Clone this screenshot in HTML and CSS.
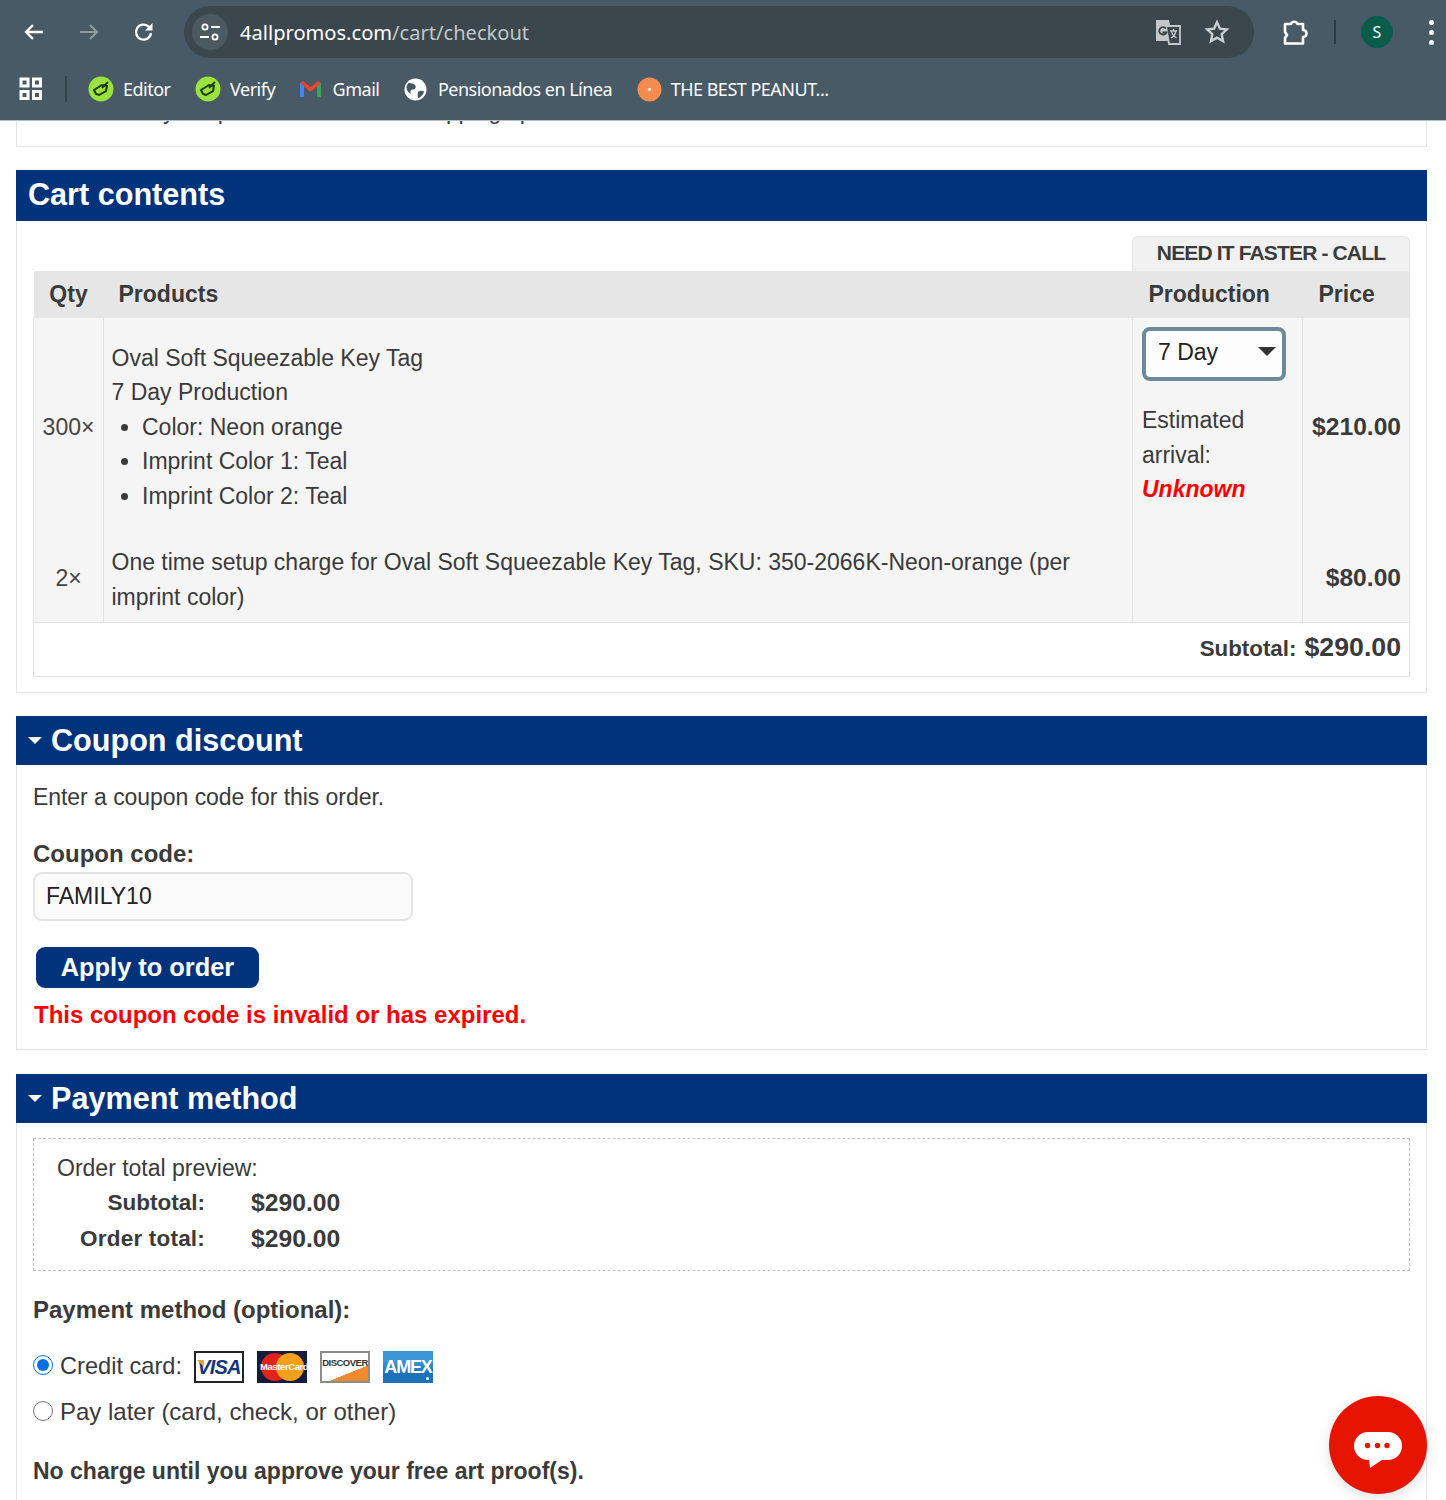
FILE: index.html
```html
<!DOCTYPE html>
<html>
<head>
	<meta charset="utf-8">
	<title>Checkout</title>
	<link rel="stylesheet" href="styles.css">
</head>
<body>
	<div class="browser">
		<div class="toolbar">
			<svg class="nav nav-back" width="24" height="24" viewBox="0 0 24 24"><path d="M21 12H4M11 5l-7 7 7 7" fill="none" stroke="#fff" stroke-width="2.4"/></svg>
			<svg class="nav nav-fwd" width="24" height="24" viewBox="0 0 24 24"><path d="M3 12h17M13 5l7 7-7 7" fill="none" stroke="#8d9aa1" stroke-width="2.2"/></svg>
			<svg class="nav nav-reload" width="24" height="24" viewBox="0 0 24 24"><path d="M19 13a7.5 7.5 0 1 1-2.4-6.4L19 9" fill="none" stroke="#fff" stroke-width="2.3"/><path d="M20.5 3v7.5H13z" fill="#fff"/></svg>
			<div class="omnibox">
				<span class="site-icon">
					<svg width="24" height="24" viewBox="0 0 24 24" fill="none" stroke="#fff" stroke-width="1.8"><circle cx="7" cy="7" r="2.6"/><path d="M13 7h9M2 17h9"/><circle cx="17" cy="17" r="2.6"/></svg>
				</span>
				<span class="url">4allpromos.com<span class="url-path">/cart/checkout</span></span>
				<svg class="translate" width="28" height="28" viewBox="0 0 28 28"><path d="M2 2h13l4 21H2z" fill="#c4c8ca"/><path d="M12 8h14v18H15z" fill="#3c474d" stroke="#c4c8ca" stroke-width="1.8"/><path d="M12 10.500a3.800 3.800 0 1 0 .5 4H8.500" fill="none" stroke="#3c474d" stroke-width="1.800"/><path d="M16 13h7M19.500 11v2M22 13c-1 4-3 6-5 7M17.500 14c1 3 3 5 5 6" fill="none" stroke="#c4c8ca" stroke-width="1.3"/></svg>
				<svg class="star" width="26" height="26" viewBox="0 0 24 24"><path d="M12 3l2.700 6 6.300.7-4.700 4.300 1.300 6.400L12 17.200 6.400 20.400l1.300-6.400L3 9.700 9.300 9z" fill="none" stroke="#c9ced1" stroke-width="2.200"/></svg>
			</div>
			<svg class="puzzle" width="28" height="30" viewBox="0 0 28 30"><path d="M4 7h6a3.500 3.500 0 0 1 6.500 0H22v6a3.500 3.500 0 0 1 0 7v6.500H4V21l2-3-2-3z" fill="none" stroke="#fff" stroke-width="2.6" stroke-linejoin="round"/></svg>
			<span class="bar-sep"></span>
			<span class="avatar">S</span>
			<span class="menu-dots"><i></i><i></i><i></i></span>
		</div>
		<div class="bookmarks">
			<svg class="apps" width="24" height="24" viewBox="0 0 24 24" fill="none" stroke="#fff" stroke-width="3"><rect x="2" y="2" width="7" height="7"/><rect x="14.500" y="2" width="7" height="7"/><rect x="2" y="14.500" width="7" height="7"/><rect x="14.500" y="14.500" width="7" height="7"/></svg>
			<span class="bm-sep"></span>
			<span class="bm">
				<svg width="26" height="26" viewBox="0 0 26 26"><circle cx="13" cy="13" r="12.500" fill="#9be23e"/><path d="M6 14l8-5 5 1-1 5-7 4-3-1z" fill="none" stroke="#1c3a10" stroke-width="2"/><path d="M14 12l6-6" stroke="#1c3a10" stroke-width="1.800"/></svg>
				Editor
			</span>
			<span class="bm">
				<svg width="26" height="26" viewBox="0 0 26 26"><circle cx="13" cy="13" r="12.500" fill="#9be23e"/><path d="M6 14l8-5 5 1-1 5-7 4-3-1z" fill="none" stroke="#1c3a10" stroke-width="2"/><path d="M14 12l6-6" stroke="#1c3a10" stroke-width="1.800"/></svg>
				Verify
			</span>
			<span class="bm bm-gmail">
				<svg width="21" height="18" viewBox="0 0 21 18"><path d="M0 17V3h4v14z" fill="#4285f4"/><path d="M17 17V3h4v14z" fill="#34a853"/><path d="M0 3l3-2 7.500 6L18 1l3 2-10.500 9z" fill="#ea4335"/></svg>
				Gmail
			</span>
			<span class="bm bm-globe">
				<svg width="23" height="23" viewBox="0 0 24 24"><circle cx="12" cy="12" r="11.500" fill="#fff"/><path d="M5 5c3 1 6 1 7 3s-1 4-3 4-3 2-2 4-3-1-4-4 0-5 2-7zM15 14c2-1 4-1 6 0-1 3-3 6-6 7-1-2-1-5 0-7z" fill="#46565f"/></svg>
				Pensionados en Línea
			</span>
			<span class="bm bm-peanut">
				<svg width="25" height="25" viewBox="0 0 26 26"><circle cx="13" cy="13" r="12.500" fill="#f58b4c"/><circle cx="13" cy="13" r="1.800" fill="#fde3d2"/></svg>
				THE BEST PEANUT...
			</span>
		</div>
	</div>

	<div class="page">
		<div class="panel panel-top">
			<p class="cut-line">Please modify the products before the shipping options</p>
		</div>

		<div class="section-head">Cart contents</div>
		<div class="panel panel-cart">
			<div class="tab-row"><span class="faster-tab">NEED IT FASTER - CALL</span></div>
			<table class="cart">
				<colgroup>
					<col class="col-qty"><col class="col-prod"><col class="col-time"><col class="col-price">
				</colgroup>
				<thead>
					<tr>
						<th class="th-qty">Qty</th>
						<th class="th-prod">Products</th>
						<th class="th-time">Production</th>
						<th class="th-price">Price</th>
					</tr>
				</thead>
				<tbody>
					<tr class="row-main">
						<td class="qty">300×</td>
						<td class="prod">
							<div>Oval Soft Squeezable Key Tag</div>
							<div>7 Day Production</div>
							<ul>
								<li>Color: Neon orange</li>
								<li>Imprint Color 1: Teal</li>
								<li>Imprint Color 2: Teal</li>
							</ul>
						</td>
						<td class="time" rowspan="2">
							<div class="select"><span>7 Day</span><i class="caret"></i></div>
							<div class="arrival">Estimated<br>arrival:<br><b>Unknown</b></div>
						</td>
						<td class="price">$210.00</td>
					</tr>
					<tr class="row-setup">
						<td class="qty">2×</td>
						<td class="prod">One time setup charge for Oval Soft Squeezable Key Tag, SKU: 350-2066K-Neon-orange (per imprint color)</td>
						<td class="price">$80.00</td>
					</tr>
				</tbody>
				<tfoot>
					<tr>
						<td colspan="4" class="subtotal"><b>Subtotal:</b> <span>$290.00</span></td>
					</tr>
				</tfoot>
			</table>
		</div>

		<div class="section-head section-toggle"><i class="head-caret"></i>Coupon discount</div>
		<div class="panel panel-coupon">
			<p class="intro">Enter a coupon code for this order.</p>
			<label class="field-label" for="coupon">Coupon code:</label>
			<input class="txt" id="coupon" type="text" value="FAMILY10">
			<button class="apply" type="button">Apply to order</button>
			<p class="error">This coupon code is invalid or has expired.</p>
		</div>

		<div class="section-head section-toggle"><i class="head-caret"></i>Payment method</div>
		<div class="panel panel-pay">
			<div class="preview">
				<div class="preview-title">Order total preview:</div>
				<div class="preview-line"><b>Subtotal:</b><span>$290.00</span></div>
				<div class="preview-line"><b>Order total:</b><span>$290.00</span></div>
			</div>
			<div class="pay-label">Payment method (optional):</div>
			<label class="pay-opt">
				<input type="radio" name="pay" checked>
				<span class="cc-label">Credit card:</span>
				<span class="cards">
					<span class="card card-visa">VISA</span>
					<span class="card card-mc">
						<svg width="46" height="28" viewBox="0 0 46 28"><circle cx="16" cy="14" r="14" fill="#e2231a"/><circle cx="31" cy="14" r="14" fill="#f5a01c"/></svg>
						<span class="mc-name">MasterCard</span>
					</span>
					<span class="card card-disc"><span>DISCOVER</span></span>
					<span class="card card-amex">AMEX</span>
				</span>
			</label>
			<label class="pay-opt">
				<input type="radio" name="pay">
				<span>Pay later (card, check, or other)</span>
			</label>
			<p class="no-charge">No charge until you approve your free art proof(s).</p>
		</div>
	</div>

	<div class="chat">
		<svg width="48" height="36" viewBox="0 0 48 36"><path d="M14 0h20a14 14 0 0 1 0 28h-6l-12 8 -1-8h-1a14 14 0 0 1 0-28z" fill="#fff"/><circle cx="13.500" cy="13.500" r="2.700" fill="#e81402"/><circle cx="23.500" cy="13.500" r="2.700" fill="#e81402"/><circle cx="33" cy="13.500" r="2.700" fill="#e81402"/></svg>
	</div>
</body>
</html>
```

FILE: styles.css
```css
*{
	padding: 0;
	margin: 0;
	box-sizing: border-box;
}
html,body{
	height: 1500px;
	overflow: hidden;
}
body{
	position: relative;
	background: #fff;
	color: #3a3a3a;
	font-family: "Liberation Sans", Arial, sans-serif;
	font-size: 23px;
}

/* browser chrome */
.browser{
	position: relative;
	height: 121px;
	background: #475a65;
	border-bottom: 1px solid #b8c0c4;
	font-family: "Noto Sans", "Open Sans", sans-serif;
	color: #fff;
}
.toolbar{
	height: 64px;
	display: flex;
	align-items: center;
}
.nav-back{ margin-left: 22px; }
.nav-fwd{ margin-left: 31px; }
.nav-reload{ margin-left: 31px; }
.omnibox{
	width: 1070px;
	height: 52px;
	margin-left: 28px;
	border-radius: 26px;
	background: #3c474d;
	display: flex;
	align-items: center;
	padding-left: 8px;
}
.site-icon{
	width: 36px;
	height: 36px;
	border-radius: 50%;
	background: #4b5960;
	display: flex;
	align-items: center;
	justify-content: center;
}
.url{
	margin-left: 12px;
	font-size: 20.1px;
	flex: 1;
}
.url-path{ color: #c0c6ca; }
.translate{ margin-right: 22px; }
.star{ margin-right: 24px; }
.puzzle{ margin-left: 27px; }
.bar-sep{
	width: 2px;
	height: 24px;
	margin-left: 25px;
	background: #2f3a40;
}
.avatar{
	width: 32px;
	height: 32px;
	margin-left: 25px;
	border-radius: 50%;
	background: #0b5b4a;
	font-size: 16px;
	text-align: center;
	line-height: 32px;
}
.menu-dots{
	margin-left: 36px;
	display: flex;
	flex-direction: column;
	gap: 5px;
}
.menu-dots i{
	width: 5px;
	height: 5px;
	border-radius: 50%;
	background: #fff;
}
.bookmarks{
	height: 50px;
	display: flex;
	align-items: center;
	font-size: 18px;
	letter-spacing: -0.5px;
	color: #fdfdfd;
}
.apps{ margin-left: 19px; }
.bm-sep{
	width: 2px;
	height: 26px;
	margin: 0 21px 0 22px;
	background: #34434b;
}
.bm{
	display: flex;
	align-items: center;
	gap: 9px;
	margin-right: 24.500px;
	white-space: nowrap;
}
.bm-gmail{ gap: 12px; }
.bm-globe{ gap: 11px; }
.bm-peanut{ gap: 9px; }

/* page */
.page{
	padding: 0 19px 0 16px;
}
.panel{
	border: 1px solid #e6e6e6;
	border-top: 0;
	padding: 0 16px;
}
.panel-top{
	height: 26px;
	overflow: hidden;
	margin-bottom: 23px;
}
.cut-line{
	margin-top: -24px;
	line-height: 28px;
	letter-spacing: -0.25px;
	white-space: nowrap;
}
.section-head{
	height: 51px;
	padding-left: 12px;
	background: #00337c;
	color: #fff;
	font-size: 30.6px;
	font-weight: bold;
	line-height: 49px;
}
.section-toggle{
	height: 49px;
	display: flex;
	align-items: center;
}
.head-caret{
	width: 0;
	height: 0;
	margin-right: 9px;
	border-left: 7.500px solid transparent;
	border-right: 7.500px solid transparent;
	border-top: 7.500px solid #fff;
}

/* cart table */
.panel-cart{
	height: 472px;
	margin-bottom: 23px;
}
.tab-row{
	height: 50px;
	display: flex;
	justify-content: flex-end;
	align-items: flex-end;
}
.faster-tab{
	width: 278px;
	height: 35px;
	background: #f1f1f1;
	border: 1px solid #e6e6e6;
	border-bottom: 0;
	border-radius: 6px 6px 0 0;
	text-align: center;
	font-size: 21px;
	letter-spacing: -0.85px;
	font-weight: bold;
	line-height: 32px;
	color: #3b3b3b;
}
.cart{
	width: 100%;
	table-layout: fixed;
	border-collapse: collapse;
}
.col-qty{ width: 70px; }
.col-time{ width: 170px; }
.col-price{ width: 107px; }
.cart th{
	height: 47px;
	background: #e6e6e6;
	font-size: 23px;
	text-align: left;
	color: #3a3a3a;
}
.th-qty{ text-align: center !important; }
.th-prod{ padding-left: 15px; }
.th-time{ padding-left: 16px; }
.th-price{ padding-left: 16px; }
.cart tbody td{
	background: #f5f5f5;
	border-left: 1px solid #e2e2e2;
	line-height: 34.500px;
}
.cart tbody tr td:first-child{ border-left: 1px solid #e6e6e6; }
.cart tbody tr td:last-child{ border-right: 1px solid #e6e6e6; }
.qty{
	text-align: center;
	color: #444;
}
.row-main{ height: 222px; }
.row-main td{
	vertical-align: middle;
	padding-bottom: 4px;
}
.row-setup{ height: 82px; }
.row-setup .qty,
.row-setup .price{ padding-bottom: 5px; }
.cart .prod{
	padding: 0 30px 2px 7.500px;
}
.cart .row-main .prod{ padding-bottom: 4px; }
.prod ul{
	list-style: disc;
	padding-left: 30.500px;
}
.row-main .time{
	vertical-align: top;
	padding: 9px 9px 0;
}
.select{
	width: 144px;
	height: 54px;
	border: 4px solid #6d8a9b;
	border-radius: 8px;
	background: #fdfdfd;
	padding: 0 6px 0 12px;
	display: flex;
	align-items: center;
	justify-content: space-between;
	color: #222;
}
.select span{ margin-top: -3px; }
.caret{
	width: 0;
	height: 0;
	margin-top: -6px;
	border-left: 9px solid transparent;
	border-right: 9px solid transparent;
	border-top: 9px solid #333;
}
.arrival{
	margin-top: 22px;
	line-height: 34.500px;
}
.arrival b{
	color: #f00;
	font-style: italic;
}
.price{
	text-align: right;
	padding-right: 8px;
	font-weight: bold;
	font-size: 24.6px;
}
.subtotal{
	height: 54px;
	text-align: right;
	padding: 0 8px 4px 0;
	border: 1px solid #e2e2e2;
	font-size: 22.3px;
	font-weight: bold;
}
.subtotal span{
	font-size: 26.7px;
	margin-left: 2px;
}

/* coupon */
.panel-coupon{
	height: 285px;
	margin-bottom: 24px;
	padding-top: 18px;
}
.intro{
	line-height: 28px;
	letter-spacing: -0.05px;
}
.field-label{
	display: block;
	margin-top: 29px;
	font-size: 24px;
	font-weight: bold;
	line-height: 28px;
}
.txt{
	display: block;
	width: 380px;
	height: 49px;
	margin-top: 4px;
	padding-left: 11px;
	border: 2px solid #e3e3e3;
	border-radius: 9px;
	background: #fbfbfb;
	font: 23px "Liberation Sans", Arial, sans-serif;
	color: #222;
	outline: none;
}
.apply{
	display: block;
	width: 223px;
	height: 41px;
	margin: 26px 0 0 3px;
	border: 0;
	border-radius: 9px;
	background: #00337c;
	color: #fff;
	font: bold 25.4px "Liberation Sans", Arial, sans-serif;
}
.error{
	margin: 12px 0 0 1px;
	color: #f00;
	font-size: 24px;
	font-weight: bold;
	line-height: 30px;
}

/* payment */
.panel-pay{
	padding-top: 15px;
	height: 400px;
}
.preview{
	height: 133px;
	padding: 13px 0 0 23px;
	border: 1.500px dashed #c4c4c4;
}
.preview-title{ line-height: 33px; }
.preview-line{
	display: flex;
	height: 36px;
	align-items: center;
	font-size: 22.5px;
}
.preview-line + .preview-line{ letter-spacing: 0.2px; }
.preview-line b{
	width: 148px;
	text-align: right;
}
.preview-line span{
	margin-left: 46px;
	font-weight: bold;
	font-size: 24.7px;
	letter-spacing: 0;
}
.pay-label{
	margin-top: 25px;
	font-size: 24px;
	font-weight: bold;
	line-height: 28px;
}
.pay-opt{
	display: flex;
	align-items: center;
	height: 46px;
	gap: 7px;
	font-size: 24px;
}
.pay-opt .cc-label{ font-size: 23.6px; }
.pay-label + .pay-opt{ margin-top: 19px; }
.pay-opt input{
	width: 20px;
	height: 20px;
	margin-top: -2px;
	accent-color: #0b6fe0;
}
.cards{
	display: flex;
	gap: 13px;
	margin: 2px 0 0 5px;
}
.card{
	position: relative;
	width: 50px;
	height: 32px;
	overflow: hidden;
	display: flex;
	align-items: center;
	justify-content: center;
}
.card-visa{
	border: 2px solid #222;
	background: #fff;
	color: #14347e;
	font-size: 20px;
	font-weight: bold;
	font-style: italic;
	letter-spacing: -0.8px;
}
.card-visa::before{
	content: "";
	position: absolute;
	left: 1px;
	top: 7px;
	width: 7px;
	height: 7px;
	background: #e8a33a;
	clip-path: polygon(0 0, 100% 0, 100% 100%);
}
.card-mc{
	background: #141c3e;
}
.card-mc svg{ display: block; }
.mc-name{
	position: absolute;
	left: 3px;
	top: 10px;
	font-size: 9.500px;
	font-weight: bold;
	color: #fff;
	letter-spacing: -0.4px;
	white-space: nowrap;
}
.card-disc{
	border: 2px solid #8c8c8c;
	background: linear-gradient(158deg, #fff 66%, #f08a2c 67%);
	align-items: flex-start;
	color: #333;
	font-size: 9.500px;
	font-weight: bold;
	letter-spacing: -0.5px;
	padding-top: 4px;
}
.card-amex{
	background: linear-gradient(#3d97d6 0, #3d97d6 30%, #1a73b8 70%);
	color: #fff;
	font-size: 18px;
	font-weight: bold;
	letter-spacing: -1.200px;
}
.card-amex::after{
	content: "";
	position: absolute;
	right: 4px;
	bottom: 3px;
	width: 3px;
	height: 3px;
	border-radius: 50%;
	background: #fff;
}
.no-charge{
	margin-top: 22px;
	font-weight: bold;
	line-height: 28px;
}

/* chat button */
.chat{
	position: absolute;
	left: 1329px;
	top: 1396px;
	width: 98px;
	height: 98px;
	border-radius: 50%;
	background: #e81402;
	box-shadow: 0 4px 14px rgba(0,0,0,.12);
	display: flex;
	align-items: center;
	justify-content: center;
}
.chat svg{ margin-top: 10px; }
```
